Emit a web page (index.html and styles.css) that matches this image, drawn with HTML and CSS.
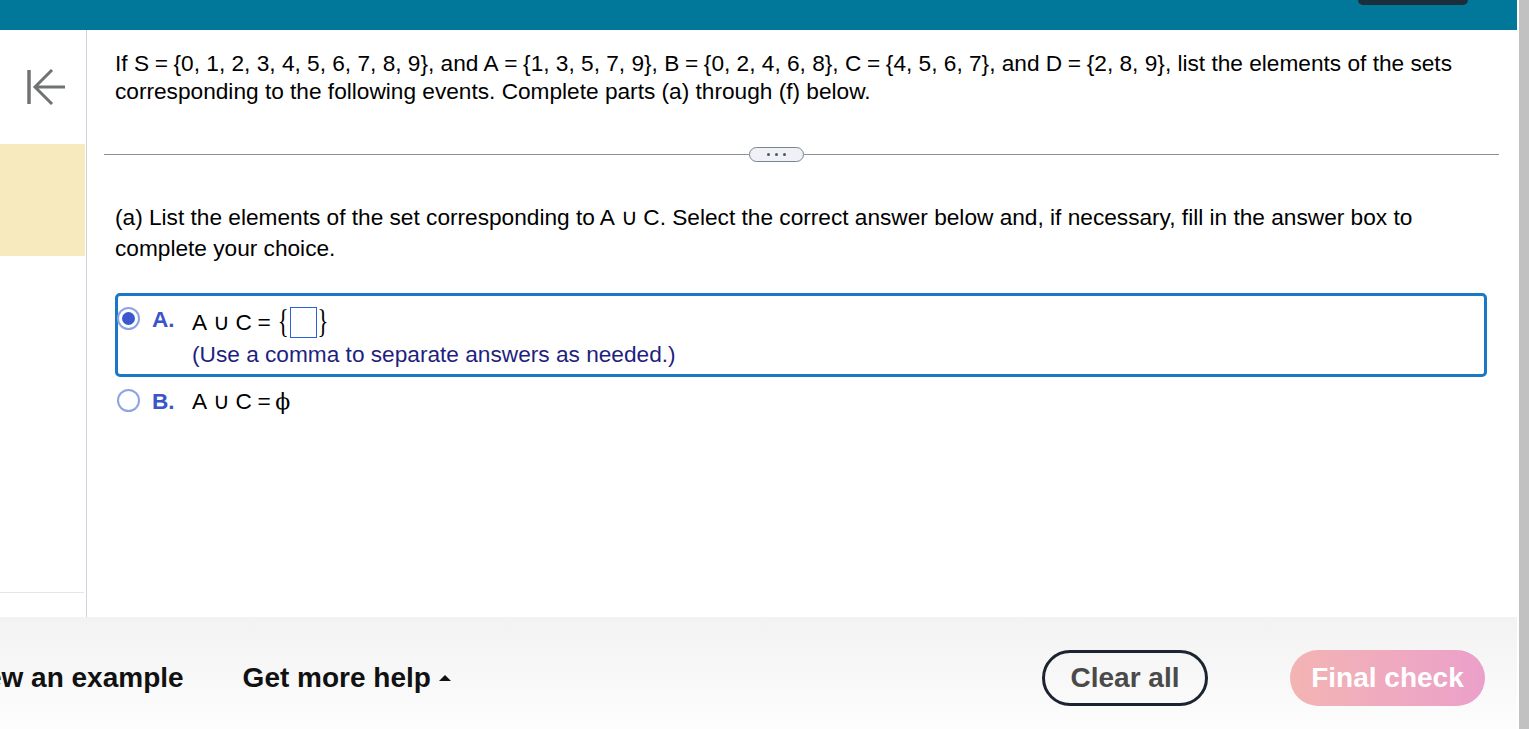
FILE: index.html
```html
<!DOCTYPE html>
<html lang="en">
<head>
    <meta charset="UTF-8">
    <meta name="viewport" content="width=device-width, initial-scale=1.0">
    <title>Sets and Events - Question</title>
    <link rel="stylesheet" href="styles.css">
</head>
<body>

<div class="window">
    <div class="app">
        <header class="topbar">
            <span class="topbar-pill"></span>
        </header>

        <div class="workspace">
            <!-- Left rail with back button -->
            <aside class="sidebar">
                <button class="back-btn" title="Back">
                    <svg width="40" height="36" viewBox="0 0 40 36">
                        <path d="M3 1V35" stroke="#6f7371" stroke-width="3.5" fill="none"/>
                        <path d="M9 18H39M26 1L9 18L26 35" stroke="#6f7371" stroke-width="3" fill="none"/>
                    </svg>
                </button>
                <div class="sidebar-note"></div>
                <div class="sidebar-rule"></div>
            </aside>

            <main class="question">
                <p class="stem">If S&#8197;=&#8197;{0, 1, 2, 3, 4, 5, 6, 7, 8, 9}, and A&#8197;=&#8197;{1, 3, 5, 7, 9}, B&#8197;=&#8197;{0, 2, 4, 6, 8}, C&#8197;=&#8197;{4, 5, 6, 7}, and D&#8197;=&#8197;{2, 8, 9}, list the elements of the sets corresponding to the following events. Complete parts (a) through (f) below.</p>

                <div class="divider">
                    <span class="divider-line first"></span>
                    <button class="expand-btn"><i></i><i></i><i></i></button>
                    <span class="divider-line"></span>
                </div>

                <p class="part">(a) List the elements of the set corresponding to A&#8197;&cup;&#8197;C. Select the correct answer below and, if necessary, fill in the answer box to complete your choice.</p>

                <div class="choice selected">
                    <span class="radio"></span>
                    <span class="letter">A.</span>
                    <div class="choice-body">
                        <div class="math-line">
                            <span class="expr">A&#8197;&cup;&#8197;C&#8197;=</span>
                            <span class="brace">{</span>
                            <span class="answer-box"></span>
                            <span class="brace">}</span>
                        </div>
                        <div class="hint">(Use a comma to separate answers as needed.)</div>
                    </div>
                </div>

                <div class="choice">
                    <span class="radio"></span>
                    <span class="letter">B.</span>
                    <div class="choice-body">
                        <span class="expr">A&#8197;&cup;&#8197;C&#8197;=&thinsp;<span class="phi">&#981;</span></span>
                    </div>
                </div>
            </main>
        </div>

        <footer class="footer">
            <span class="footer-link example-link">View an example</span>
            <span class="footer-link help-link">Get more help <span class="caret"></span></span>
            <span class="spacer"></span>
            <button class="clear-btn">Clear all</button>
            <button class="check-btn">Final check</button>
        </footer>
    </div>
    <div class="scrollbar"></div>
</div>

</body>
</html>
```

FILE: styles.css
```css
body {
    margin: 0;
    font-family: "Liberation Sans", Arial, sans-serif;
    color: #000;
    background-color: #fff;
    overflow: hidden;
}
.window {
    display: flex;
    width: 1529px;
    height: 729px;
}
.app {
    width: 1517px;
    display: flex;
    flex-direction: column;
}
.scrollbar {
    width: 10px;
    margin-left: 2px;
    background-color: #c1c1c1;
}

/* Top bar */
.topbar {
    height: 30px;
    background-color: #017799;
    display: flex;
    justify-content: flex-end;
    padding-right: 49px;
    flex-shrink: 0;
}
.topbar-pill {
    width: 110px;
    height: 5px;
    background-color: #1b2e3c;
    border-radius: 0 0 14px 14px;
}

.workspace {
    flex: 1;
    display: flex;
    min-height: 0;
}

/* Sidebar */
.sidebar {
    width: 86px;
    border-right: 1px solid #cdd3dd;
    display: flex;
    flex-direction: column;
}
.back-btn {
    margin: 39px 0 0 26px;
    padding: 0;
    border: none;
    background: none;
    width: 40px;
    height: 36px;
    cursor: pointer;
}
.back-btn svg {
    display: block;
}
.sidebar-note {
    margin-top: 39px;
    width: 85px;
    height: 112px;
    background-color: #f8eabf;
}
.sidebar-rule {
    margin-top: auto;
    margin-bottom: 24px;
    width: 84px;
    height: 1px;
    background-color: #e2e5ea;
}

/* Question area */
.question {
    flex: 1;
    padding: 19px 18px 0 28px;
    font-size: 22.67px;
}
.stem {
    margin: 0;
    line-height: 28px;
}
.divider {
    display: flex;
    align-items: center;
    height: 15px;
    margin: 42px 0 0 -11px;
}
.divider-line {
    flex: 1;
    height: 1px;
    background-color: #8b929c;
}
.divider-line.first {
    flex: none;
    width: 645px;
}
.expand-btn {
    width: 55px;
    height: 15px;
    box-sizing: border-box;
    border: 1.5px solid #7b8490;
    border-radius: 8px;
    background-color: #eef1f5;
    display: flex;
    align-items: center;
    justify-content: center;
    gap: 5px;
    padding: 0;
    cursor: pointer;
}
.expand-btn i {
    width: 3px;
    height: 3px;
    border-radius: 50%;
    background-color: #4f555d;
}
.part {
    margin: 40px 0 0 0;
    line-height: 31px;
}

/* Answer choices */
.choice {
    display: flex;
    align-items: flex-start;
    margin-right: 12px;
    border: 3px solid transparent;
    border-radius: 5px;
    padding: 8px 0 6px 0;
}
.choice.selected {
    margin-top: 29px;
    border-color: #1a78c6;
}
.choice + .choice {
    padding-top: 6px;
}
.radio {
    width: 23px;
    height: 23px;
    box-sizing: border-box;
    margin: 3px 0 0 -1px;
    border: 2px solid #8ba4e6;
    border-radius: 50%;
    background-color: #fff;
    display: flex;
    align-items: center;
    justify-content: center;
    flex-shrink: 0;
}
.selected .radio::after {
    content: "";
    width: 13px;
    height: 13px;
    border-radius: 50%;
    background-color: #3a58d0;
}
.letter {
    width: 40px;
    margin-left: 12px;
    line-height: 30px;
    font-weight: bold;
    color: #3b55c9;
}
.choice-body {
    line-height: 30px;
}
.math-line {
    display: flex;
    align-items: center;
    height: 36px;
}
.expr {
    margin-right: 7px;
}
.brace {
    display: inline-block;
    font-family: "Liberation Serif", serif;
    font-weight: normal;
    transform: scaleY(1.45);
}
.answer-box {
    width: 27px;
    height: 31px;
    box-sizing: border-box;
    border: 1px solid #2d62d6;
    margin: 0 1px;
}
.hint {
    line-height: 28px;
    color: #1f1f80;
}
.phi {
    font-family: "DejaVu Serif", "Liberation Serif", serif;
    font-size: 22px;
}

/* Footer */
.footer {
    height: 112px;
    box-sizing: border-box;
    padding: 10px 32px 0 0;
    display: flex;
    align-items: center;
    background: linear-gradient(#f2f2f2, #fdfdfd);
    flex-shrink: 0;
}
.footer-link {
    font-size: 28px;
    font-weight: bold;
    color: #111;
    white-space: nowrap;
}
.example-link {
    margin-left: -40px;
}
.help-link {
    margin-left: 59px;
    display: flex;
    align-items: center;
}
.caret {
    margin-left: 8px;
    width: 0;
    height: 0;
    border-left: 6px solid transparent;
    border-right: 6px solid transparent;
    border-bottom: 6px solid #111;
}
.spacer {
    flex: 1;
}
.clear-btn, .check-btn {
    height: 56px;
    border-radius: 28px;
    font-family: "Liberation Sans", Arial, sans-serif;
    font-size: 28px;
    font-weight: bold;
    cursor: pointer;
    padding: 0;
}
.clear-btn {
    width: 166px;
    border: 3px solid #1c2331;
    background: transparent;
    color: #4a4a4a;
}
.check-btn {
    width: 195px;
    margin-left: 82px;
    border: none;
    background: linear-gradient(90deg, #f3b4b3, #eba0ca);
    color: #fff;
}
```
